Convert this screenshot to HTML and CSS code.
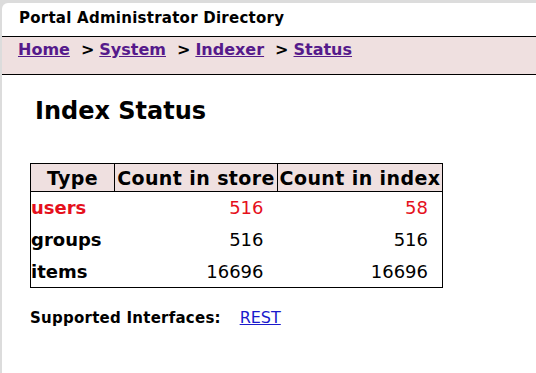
FILE: index.html
```html
<!DOCTYPE html>
<html lang="en">
<head>
  <meta charset="UTF-8" />
  <title>Index Status</title>
  <link rel="stylesheet" href="styles.css">
</head>
<body>
  <div class="frame">
    <div class="title-bar">Portal Administrator Directory</div>

    <div class="crumbs">
      <a href="#">Home</a><span class="sep">&gt;</span><a href="#">System</a><span class="sep">&gt;</span><a href="#">Indexer</a><span class="sep">&gt;</span><a href="#">Status</a>
    </div>

    <div class="content">
      <h2>Index Status</h2>

      <table class="status">
        <colgroup>
          <col class="c-type">
          <col class="c-store">
          <col class="c-index">
        </colgroup>
        <tr>
          <th>Type</th>
          <th>Count in store</th>
          <th>Count in index</th>
        </tr>
        <tr class="bad">
          <td class="type">users</td>
          <td class="num">516</td>
          <td class="num">58</td>
        </tr>
        <tr>
          <td class="type">groups</td>
          <td class="num">516</td>
          <td class="num">516</td>
        </tr>
        <tr>
          <td class="type">items</td>
          <td class="num">16696</td>
          <td class="num">16696</td>
        </tr>
      </table>

      <p class="ifaces">
        <b>Supported Interfaces:</b>
        <a href="#">REST</a>
      </p>
    </div>
  </div>
</body>
</html>
```

FILE: styles.css
```css
* {
  margin: 0; padding: 0; box-sizing: border-box;
}

body {
  background: #dcdcdc;
  font-family: Verdana, "DejaVu Sans", sans-serif;
  color: #000;
}

.frame {
  margin: 3px 0 0 2px;
  background: #fff;
  border-top-left-radius: 6px;
  min-height: 370px;
}

.title-bar {
  font-size: 15px;
  font-weight: bold;
  letter-spacing: 0.25px;
  padding: 6px 17px 0;
  height: 34px;
  border-bottom: 1px solid #000;
}

.crumbs {
  background: #efe0e0;
  height: 38px;
  padding: 3px 16px 0;
  font-size: 16px;
  font-weight: bold;
  border-bottom: 1px solid #000;
}

.crumbs a {
  color: #551a8b;
}

.crumbs .sep {
  display: inline-block;
  margin: 0 5px 0 11px;
}

.content {
  padding: 22px 28px;
}

h2 {
  font-size: 24px;
  margin: 0 0 38px 5px;
}

.status {
  border: 1px solid #000;
  border-collapse: collapse;
  table-layout: fixed;
  width: 412px;
  font-size: 18px;
}

.c-type { width: 84px; }
.c-store { width: 163px; }
.c-index { width: 165px; }

.status th {
  background: #efe0e0;
  border: 1px solid #000;
  font-size: 19px;
  letter-spacing: 0.4px;
  height: 28px;
  padding: 0;
  white-space: nowrap;
  overflow: hidden;
}

.status td {
  height: 32px;
  padding: 0;
}

.status td.type {
  font-weight: bold;
}

.status td.num {
  text-align: right;
  padding-right: 14px;
}

.status tr.bad td {
  color: #e5101c;
}

.ifaces {
  margin-top: 20px;
  font-size: 15px;
}

.ifaces b {
  letter-spacing: 0.25px;
}

.ifaces a {
  color: #1a1acc;
  font-size: 16px;
  margin-left: 14px;
}
```
